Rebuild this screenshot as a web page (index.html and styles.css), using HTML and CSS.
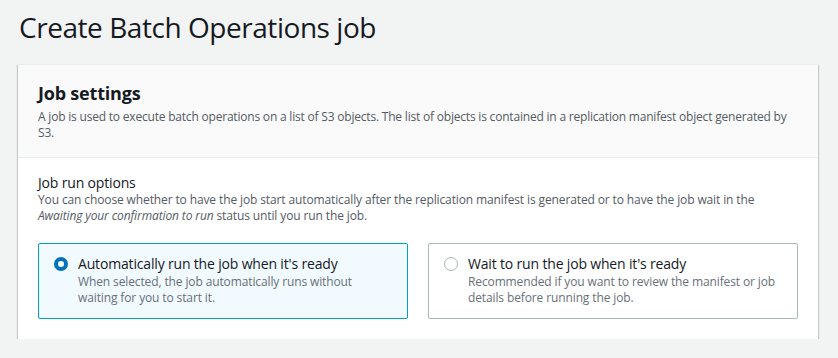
FILE: index.html
```html
<!DOCTYPE html>
<html lang="en">
<head>
  <meta charset="UTF-8">
  <meta name="viewport" content="width=device-width, initial-scale=1.0">
  <title>Create Batch Operations job</title>
  <link rel="stylesheet" href="styles.css">
</head>
<body>
  <div class="page">
    <h1 class="page-title">Create Batch Operations job</h1>

    <div class="container">
      <div class="container-header">
        <h2>Job settings</h2>
        <p class="header-desc">A job is used to execute batch operations on a list of S3 objects. The list of objects is contained in a replication manifest object generated by S3.</p>
      </div>

      <div class="container-body">
        <div class="field-label">Job run options</div>
        <p class="field-desc">You can choose whether to have the job start automatically after the replication manifest is generated or to have the job wait in the <em>Awaiting your confirmation to run</em> status until you run the job.</p>

        <div class="tiles">
          <label class="tile selected">
            <span class="radio checked"></span>
            <span class="tile-text">
              <span class="tile-label">Automatically run the job when it's ready</span>
              <span class="tile-desc">When selected, the job automatically runs without waiting for you to start it.</span>
            </span>
          </label>
          <label class="tile">
            <span class="radio"></span>
            <span class="tile-text">
              <span class="tile-label">Wait to run the job when it's ready</span>
              <span class="tile-desc">Recommended if you want to review the manifest or job details before running the job.</span>
            </span>
          </label>
        </div>
      </div>
    </div>
  </div>
</body>
</html>
```

FILE: styles.css
```css
body {
  margin: 0;
  background-color: #f2f3f3;
  font-family: "Open Sans", "Noto Sans", sans-serif;
  color: #16191f;
}
.page {
  padding: 7px 20px 0 18px;
}
.page-title {
  margin: 0 0 0 1px;
  font-size: 28px;
  font-weight: 400;
  line-height: 40px;
  letter-spacing: -0.45px;
}
.container {
  margin-top: 17px;
  background-color: #fff;
  border-top: 1px solid #eaeded;
  box-shadow: 0 1px 1px 0 rgba(0, 28, 36, 0.3), 1px 1px 1px 0 rgba(0, 28, 36, 0.15), -1px 1px 1px 0 rgba(0, 28, 36, 0.15);
}
.container-header {
  background-color: #fafafa;
  border-bottom: 1px solid #eaeded;
  padding: 17px 20px 16px;
}
.container-header h2 {
  margin: 0;
  font-size: 18px;
  font-weight: 700;
  line-height: 22px;
  letter-spacing: -0.2px;
}
.header-desc {
  margin: 5px 0 0;
  font-size: 12px;
  line-height: 16px;
  letter-spacing: -0.2px;
  color: #545b64;
}
.container-body {
  padding: 16px 20px 20px;
}
.field-label {
  font-size: 14px;
  line-height: 18px;
  letter-spacing: -0.17px;
}
.field-desc {
  margin: 0;
  font-size: 12px;
  line-height: 16px;
  letter-spacing: -0.12px;
  color: #545b64;
}
.tiles {
  display: grid;
  grid-template-columns: 1fr 1fr;
  gap: 20px;
  margin-top: 19px;
}
.tile {
  display: flex;
  gap: 10px;
  padding: 11px 15px 12px;
  border: 1px solid #aab7b8;
  border-radius: 2px;
  background-color: #fff;
}
.tile.selected {
  border-color: #00a1c9;
  background-color: #f1faff;
}
.radio {
  flex: none;
  box-sizing: border-box;
  width: 14px;
  height: 14px;
  margin-top: 2px;
  border: 1px solid #aab7b8;
  border-radius: 50%;
  background-color: #fff;
}
.radio.checked {
  border: 4px solid #0073bb;
}
.tile-text {
  display: flex;
  flex-direction: column;
  gap: 1px;
}
.tile-label {
  font-size: 14px;
  line-height: 18px;
  letter-spacing: -0.17px;
}
.tile-desc {
  font-size: 12px;
  line-height: 16px;
  letter-spacing: -0.12px;
  color: #687078;
}
```
